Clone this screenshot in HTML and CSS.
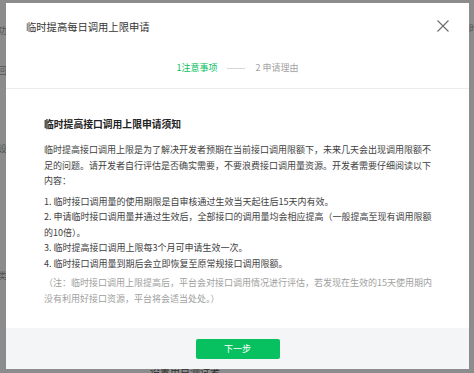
FILE: index.html
```html
<!DOCTYPE html>
<html lang="zh-CN">
<head>
    <meta charset="UTF-8">
    <title>临时提高每日调用上限申请</title>
    <link rel="stylesheet" href="styles.css">
</head>
<body>

    <!-- Page behind the dialog -->
    <div class="page">
        <div class="page-row row-a">功</div>
        <div class="page-row row-b">回</div>
        <div class="page-row row-c">设</div>
        <div class="page-row row-d">类</div>
        <div class="page-side">时</div>
        <div class="page-foot">设置用户测试者</div>
    </div>

    <!-- Dialog -->
    <div class="dialog">
        <div class="dialog-head">
            <div class="dialog-title">临时提高每日调用上限申请</div>
            <button class="dialog-close" aria-label="关闭">
                <svg width="12" height="12" viewBox="0 0 12 12">
                    <path d="M0.5 0.5 L11.5 11.5 M11.5 0.5 L0.5 11.5" stroke="#6b6b6b" stroke-width="1.1" fill="none"/>
                </svg>
            </button>
            <div class="steps">
                <span class="step active">1注意事项</span>
                <span class="step-line"></span>
                <span class="step">2 申请理由</span>
            </div>
        </div>

        <div class="dialog-body">
            <h3 class="notice-title">临时提高接口调用上限申请须知</h3>
            <p class="notice-text">临时提高接口调用上限是为了解决开发者预期在当前接口调用限额下，未来几天会出现调用限额不足的问题。请开发者自行评估是否确实需要，不要浪费接口调用量资源。开发者需要仔细阅读以下内容：</p>
            <ol class="notice-list">
                <li>1. 临时接口调用量的使用期限是自审核通过生效当天起往后15天内有效。</li>
                <li>2. 申请临时接口调用量并通过生效后，全部接口的调用量均会相应提高（一般提高至现有调用限额的10倍）。</li>
                <li>3. 临时提高接口调用上限每3个月可申请生效一次。</li>
                <li>4. 临时接口调用量到期后会立即恢复至原常规接口调用限额。</li>
            </ol>
            <p class="notice-note">（注：临时接口调用上限提高后，平台会对接口调用情况进行评估，若发现在生效的15天使用期内没有利用好接口资源，平台将会适当处处。）</p>
        </div>

        <div class="dialog-foot">
            <button class="btn-primary">下一步</button>
        </div>
    </div>

</body>
</html>
```

FILE: styles.css
```css
/* Reset */
* {
    margin: 0;
    padding: 0;
    box-sizing: border-box;
}

body {
    font-family: "Noto Sans CJK SC", "Noto Sans", sans-serif;
    width: 474px;
    height: 373px;
    overflow: hidden;
    position: relative;
    background: #8c8c8c;
    color: #353535;
}

/* Background page under the mask */
.page {
    width: 100%;
    height: 100%;
    font-size: 9px;
    color: #555;
}

.page-row {
    position: absolute;
    left: -2px;
}

.row-a { top: 24px; }
.row-b { top: 64px; }
.row-c { top: 142px; }
.row-d { top: 269px; }

.page-side {
    position: absolute;
    top: 22px;
    left: 469px;
}

.page-foot {
    position: absolute;
    top: 364px;
    left: 150px;
    font-size: 10px;
    color: #2e2e2e;
}

/* Dialog */
.dialog {
    position: absolute;
    z-index: 1;
    top: 3px;
    left: 6px;
    width: 463px;
    height: 366px;
    background: #fff;
    display: flex;
    flex-direction: column;
}

.dialog-head {
    height: 86px;
    border-bottom: 1px solid #ececec;
    position: relative;
}

.dialog-title {
    font-size: 10.3px;
    line-height: 16px;
    padding: 16px 0 0 20px;
    color: #353535;
}

.dialog-close {
    position: absolute;
    top: 17px;
    right: 20px;
    width: 12px;
    height: 12px;
    border: none;
    background: none;
    display: flex;
}

.steps {
    display: flex;
    justify-content: center;
    align-items: center;
    gap: 10px;
    margin-top: 26px;
    font-size: 9px;
    line-height: 14px;
    color: #a3a3a3;
}

.step.active {
    color: #07c160;
}

.step-line {
    width: 18px;
    border-top: 1px solid #d6d6d6;
}

/* Body */
.dialog-body {
    flex: 1;
    padding: 28px 31px 0 38px;
    font-size: 9px;
    line-height: 15.5px;
    color: #3e3e3e;
}

.notice-title {
    font-size: 9.8px;
    line-height: 15px;
    font-weight: bold;
    color: #222;
    margin-bottom: 10px;
}

.notice-list {
    list-style: none;
    margin-top: 5px;
}

.notice-note {
    margin-top: 4px;
    color: #a0a0a0;
}

/* Footer */
.dialog-foot {
    height: 41px;
    background: #f4f5f7;
    display: flex;
    justify-content: center;
    align-items: center;
}

.btn-primary {
    width: 84px;
    height: 20px;
    border: none;
    border-radius: 2px;
    background: #07c160;
    color: #fff;
    font-family: inherit;
    font-size: 9px;
    cursor: pointer;
}
```
